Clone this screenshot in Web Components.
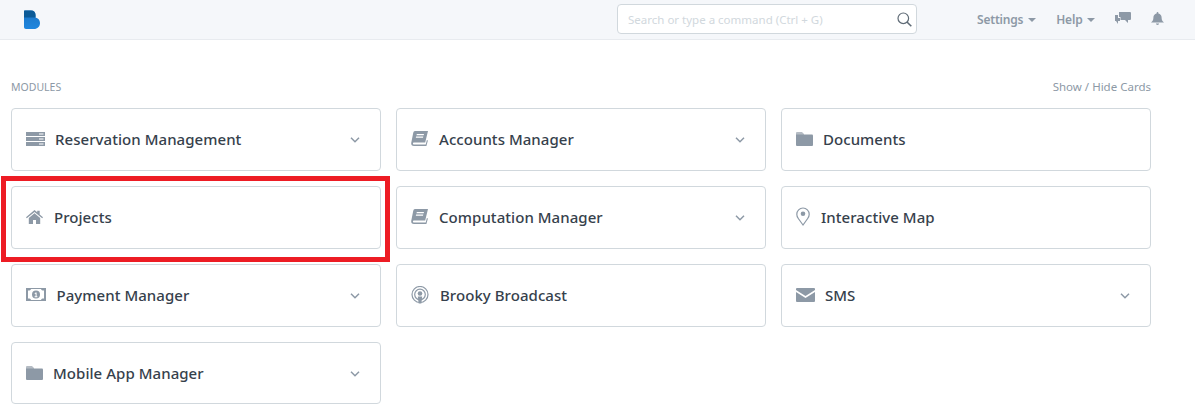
<!DOCTYPE html>
<html><head><meta charset="utf-8"><title>Modules</title>
<style>
html,body{margin:0;padding:0;background:#fff;font-family:"Noto Sans","Open Sans",sans-serif;}
body{width:1195px;height:416px;overflow:hidden;position:relative;}
</style></head><body>
<app-nav></app-nav>
<modules-page>
  <module-card icon="server" label="Reservation Management" chevron></module-card>
  <module-card icon="book" label="Accounts Manager" chevron></module-card>
  <module-card icon="folder" label="Documents"></module-card>
  <module-card icon="home" label="Projects"></module-card>
  <module-card icon="book" label="Computation Manager" chevron></module-card>
  <module-card icon="pin" label="Interactive Map"></module-card>
  <module-card icon="money" label="Payment Manager" chevron></module-card>
  <module-card icon="podcast" label="Brooky Broadcast"></module-card>
  <module-card icon="mail" label="SMS" chevron></module-card>
  <module-card icon="folder" label="Mobile App Manager" chevron></module-card>
</modules-page>
<highlight-box></highlight-box>
<script>
const ICONS={
 server:[19,'<svg width="19" height="14" viewBox="0 0 19 14"><g fill="#8d99a6"><path d="M0 0h19v4H0zM0 5h19v4H0zM0 10h19v4H0z"/></g><g fill="#fff"><path d="M13 1.400h4.500v1.200H13zM13 6.400h4.500v1.200H13zM13 11.400h4.500v1.200H13z"/></g></svg>'],
 home:[17,'<svg width="17" height="14" viewBox="0 0 17 14"><path fill="#8d99a6" d="M8.500 0 11.200 2.300V.8h2.500v3.600L17 7.200l-.8 1.100L8.500 2.100.8 8.300 0 7.200z"/><path fill="#8d99a6" d="M2.800 8 8.500 3.300 14.200 8V14H10V10H7v4H2.800z"/></svg>'],
 money:[20,'<svg width="20" height="13" viewBox="0 0 20 13"><path fill="#8d99a6" fill-rule="evenodd" d="M0 0h20v13H0zM2 2.500v8h1.500A2 2 0 0 1 5 12h10a2 2 0 0 1 1.500-1.500H18v-8h-1.500A2 2 0 0 1 15 1H5A2 2 0 0 1 3.500 2.500zM10 2.500a4 4 0 1 1 0 8 4 4 0 0 1 0-8zM9.700 4.500 8.500 5.300l.5.8.6-.4v2.600h-1v1h2.800v-1h-.8v-3.800z"/></svg>'],
 folder:[17,'<svg width="17" height="14" viewBox="0 0 17 14"><path fill="#b5bcc4" d="M1 0h5l2 2v2H0V1a1 1 0 0 1 1-1z"/><path fill="#8d99a6" d="M0 2.500h16a1 1 0 0 1 1 1V13a1 1 0 0 1-1 1H1a1 1 0 0 1-1-1z"/></svg>'],
 book:[17,'<svg width="17" height="15" viewBox="0 0 17 15"><path fill="#8d99a6" d="M4 0h13l-2.800 11.500H3.200c-.9 0-1.300.5-1.300 1s.4 1 1.300 1H14.700L15.900 9l1 .5L15.400 15H3c-2 0-3-1.300-2.800-3L2.200 2C2.500.8 3 0 4 0z"/><path fill="#fff" d="M5.800 3h7.200l-.3 1.200H5.500zM5.100 5.500h7.200l-.3 1.200H4.800z"/></svg>'],
 podcast:[18,'<svg width="18" height="18" viewBox="0 0 18 18"><g fill="none" stroke="#8d99a6"><circle cx="9" cy="8.500" r="8" stroke-width="1.200"/><circle cx="9" cy="8.500" r="5.300" stroke-width="1.200"/></g><circle cx="9" cy="7.500" r="2.300" fill="#8d99a6"/><path fill="#8d99a6" d="M6.800 10.500h4.400l-.9 7H7.700z"/></svg>'],
 pin:[14,'<svg width="14" height="19" viewBox="0 0 14 19"><path fill="none" stroke="#8d99a6" stroke-width="1.200" d="M7 18 2.300 11.500C1.200 10 .8 8.800.8 7.200a6.200 6.200 0 0 1 12.400 0c0 1.600-.4 2.800-1.500 4.300z"/><circle cx="7" cy="6.800" r="2.300" fill="#8d99a6"/></svg>'],
 mail:[19,'<svg width="19" height="14" viewBox="0 0 19 14"><path fill="#8d99a6" d="M0 1a1 1 0 0 1 1-1h17a1 1 0 0 1 1 1v1L9.500 8 0 2zM0 4l9.500 6L19 4v9a1 1 0 0 1-1 1H1a1 1 0 0 1-1-1z"/></svg>']
};
const GAPS={server:10,home:11,money:10.500,folder:10,book:11,podcast:11,pin:11,mail:10};

class AppNav extends HTMLElement{
 constructor(){super();this.attachShadow({mode:'open'}).innerHTML=`<style>
 :host{display:flex;align-items:center;height:39px;background:#f5f7fa;border-bottom:1px solid #e8ebef;box-sizing:content-box;padding:0 30px 0 24px;font-family:"Noto Sans","Open Sans",sans-serif}
 .logo{display:block;flex:none}
 .search{flex:none;margin-left:577px;align-self:flex-start;margin-top:4px;box-sizing:border-box;width:300px;height:30px;background:#fff;border:1px solid #d1d8dd;border-radius:4px;display:flex;align-items:center;justify-content:space-between;padding:0 4px 0 10px;font-size:11.500px;color:#d1d8dd}
 .item{font-size:12px;letter-spacing:-.2px;font-weight:600;color:#8d99a6;display:flex;align-items:center;gap:5px}
 .caret{width:0;height:0;border:4px solid transparent;border-top:4px solid #8d99a6;border-bottom:0}
 .s{margin-left:60px}.h{margin-left:20px}.c{margin-left:20px;display:block;margin-top:-3px}.b{margin-left:20px;display:block;margin-top:-2px}
 </style>
 <svg class="logo" width="16" height="20" viewBox="0 0 16 20"><defs><linearGradient id="g" x1="0" y1="0" x2="0" y2="1"><stop offset="0" stop-color="#1b74c4"/><stop offset="1" stop-color="#1f86de"/></linearGradient></defs><path fill="url(#g)" d="M1 0.500h6c3 0 4.500 2 4.500 4.500v2.500c2.500.5 4.500 2.500 4.500 5.500 0 3.500-2.500 6-6 6H2c-1.200 0-2-.8-2-2V1.500c0-.6.400-1 1-1z"/><path fill="#0b5a97" d="M1 .5h6c3 0 4.500 2 4.500 4.500v2.500H0V1.500c0-.6.400-1 1-1z"/></svg>
 <div class="search"><span>Search or type a command (Ctrl + G)</span>
 <svg width="15" height="15" viewBox="0 0 15 15"><circle cx="6.300" cy="6.300" r="5.300" fill="none" stroke="#5f6b76" stroke-width="1.200"/><path d="m10 10 4.300 4.300" stroke="#5f6b76" stroke-width="1.600"/></svg></div>
 <div class="item s">Settings<span class="caret"></span></div>
 <div class="item h">Help<span class="caret"></span></div>
 <svg class="c" width="16" height="12" viewBox="0 0 16 12"><path fill="#8d99a6" d="M4 0h11a1 1 0 0 1 1 1v6a1 1 0 0 1-1 1h-2v3l-3-3H5.500V5H4z"/><path fill="#8d99a6" d="M0 3h3v3h2v3H3v3L1 9H0z"/></svg>
 <svg class="b" width="13" height="13" viewBox="0 0 13 13"><path fill="#8d99a6" d="M6.500 0c.5 0 .9.400.9 1v.6c2 .4 3.200 2 3.200 4 0 2.700.8 3.700 2.400 5H0C1.600 9.300 2.400 8.300 2.400 5.600c0-2 1.200-3.600 3.200-4V1c0-.6.400-1 .9-1zM4.900 11.500h3.200a1.600 1.500 0 0 1-3.200 0z"/></svg>`;}
}
class ModulesPage extends HTMLElement{
 constructor(){super();this.attachShadow({mode:'open'}).innerHTML=`<style>
 :host{display:block;padding:0 44px 0 11px;font-family:"Noto Sans","Open Sans",sans-serif}
 .head{display:flex;justify-content:space-between;align-items:center;height:16px;margin-top:39px;margin-bottom:13px}
 .t{font-size:10.500px;color:#8d99a6;text-transform:uppercase}
 .a{font-size:11.500px;color:#8d99a6;margin-bottom:2px}
 .grid{display:grid;grid-template-columns:repeat(3,370px);grid-auto-rows:63px;gap:15px;align-items:start}
 </style><div class="head"><span class="t">Modules</span><span class="a">Show / Hide Cards</span></div><div class="grid"><slot></slot></div>`;}
}
class ModuleCard extends HTMLElement{
 connectedCallback(){
  if(this.shadowRoot)return;
  const k=this.getAttribute('icon'),ic=ICONS[k];
  const last=this.getAttribute('label')==='Mobile App Manager';
  this.attachShadow({mode:'open'}).innerHTML=`<style>
  :host{display:flex;align-items:center;box-sizing:border-box;height:${last?62:63}px;border:1px solid #d1d8dd;border-radius:4px;background:#fff;padding:0 20.500px ${last?1:2}px 14px}
  .i{flex:none;display:flex;align-items:center;margin-right:${GAPS[k]}px;height:20px}
  .l{flex:1;font-size:15px;font-weight:500;letter-spacing:.05px;color:#36414c;white-space:nowrap}
  .ch{flex:none;margin-top:2px}
  svg{display:block}
  </style><span class="i">${ic[1]}</span><span class="l">${this.getAttribute('label')}</span>${this.hasAttribute('chevron')?'<svg class="ch" width="10" height="6" viewBox="0 0 10 6"><path d="M1 .8 5 4.800 9 .8" fill="none" stroke="#8d99a6" stroke-width="1.500"/></svg>':''}`;
 }
}
class HighlightBox extends HTMLElement{
 constructor(){super();this.attachShadow({mode:'open'}).innerHTML=`<style>
 :host{display:block;position:absolute;left:1px;top:176px;width:389px;height:86px;box-sizing:border-box;border:5px solid #ed1c24;pointer-events:none}
 </style>`;}
}
customElements.define('app-nav',AppNav);
customElements.define('modules-page',ModulesPage);
customElements.define('module-card',ModuleCard);
customElements.define('highlight-box',HighlightBox);
</script>
</body></html>
